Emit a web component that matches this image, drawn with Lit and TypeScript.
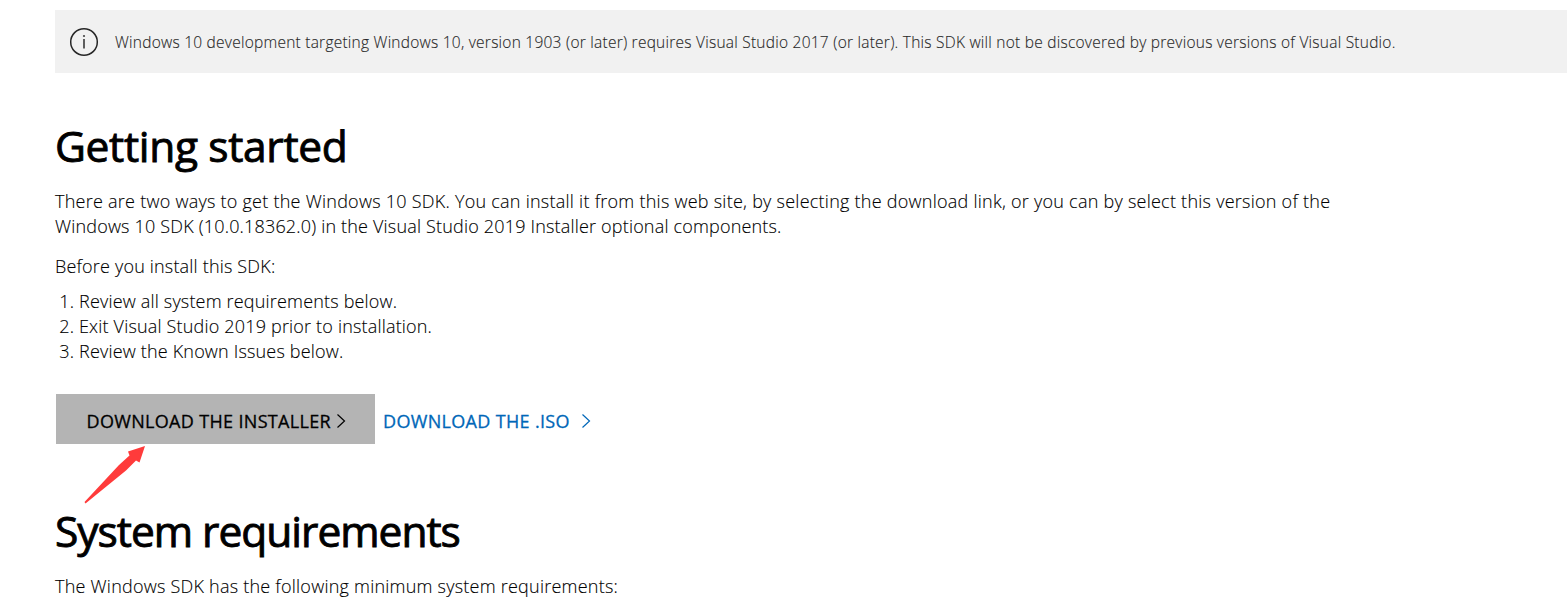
import { LitElement, html, css } from "lit";
import { customElement } from "lit/decorators.js";

const steps = [
  "Review all system requirements below.",
  "Exit Visual Studio 2019 prior to installation.",
  "Review the Known Issues below.",
];

@customElement("app-root")
export class AppRoot extends LitElement {
  static styles = css`
    :host {
      display: block;
      box-sizing: border-box;
      height: 612px;
      overflow: hidden;
      padding: 10px 0 0 55px;
      background: #fff;
      color: #000;
      font: 300 18px/25px "Open Sans", "Noto Sans", sans-serif;
      letter-spacing: 0.18px;
      white-space: nowrap;
      -webkit-text-stroke: 0.12px currentColor;
    }
    p, h2, ol { margin: 0; }
    .notice {
      display: flex;
      align-items: center;
      gap: 16px;
      height: 63px;
      box-sizing: border-box;
      padding: 0 14px 0 14px;
      background: #f1f1f1;
      color: #262626;
      font-size: 15.5px;
      letter-spacing: 0.24px;
    }
    .notice p { padding-top: 2px; }
    .info { flex: none; display: block; }
    h2 {
      font-weight: 500;
      font-size: 42.5px;
      line-height: 56px;
      -webkit-text-stroke: 0.9px currentColor;
    }
    .h-start { letter-spacing: -0.33px; }
    .h-system { letter-spacing: -1.02px; }
    .start { padding-top: 45px; }
    .lead { padding-top: 15px; }
    .t-lead1 { letter-spacing: 0.25px; }
    .t-system { letter-spacing: 0.23px; }
    .before { padding-top: 15px; }
    ol { padding: 10px 0 0 24px; }
    .actions { display: flex; align-items: center; padding: 30px 0 0 1px; }
    .button, .link {
      display: flex;
      align-items: center;
      height: 50px;
      padding-top: 4px;
      box-sizing: border-box;
      font-weight: 500;
      letter-spacing: 0.33px;
      color: inherit;
      text-decoration: none;
    }
    .button span, .link span { -webkit-text-stroke: 0.3px currentColor; }
    .button { position: relative; width: 319px; padding-left: 30.5px; gap: 4.5px; background: #b4b4b4; }
    .link { margin-left: 8px; gap: 11px; color: #0067b8; }
    .arrow { position: absolute; left: 27px; top: 51px; }
    .system { padding-top: 59px; }
  `;

  private chevron() {
    return html`<svg width="10" height="16" viewBox="0 0 10 16" fill="none" stroke="currentColor" stroke-width="1.2"><path d="M1.500 1.500 8.500 8 1.500 14.500"/></svg>`;
  }

  render() {
    return html`
      <div class="notice">
        <svg class="info" width="30" height="30" viewBox="0 0 30 30">
          <circle cx="15" cy="15" r="13.3" fill="none" stroke="#262626" stroke-width="1.5"/>
          <path d="M15 12v9.500" stroke="#444" stroke-width="1.700"/>
          <circle cx="15" cy="9" r="1.1" fill="#444"/>
        </svg>
        <p>Windows 10 development targeting Windows 10, version 1903 (or later) requires Visual Studio 2017 (or later). This SDK will not be discovered by previous versions of Visual Studio.</p>
      </div>
      <section class="start">
        <h2 class="h-start">Getting started</h2>
        <p class="lead"><span class="t-lead1">There are two ways to get the Windows 10 SDK. You can install it from this web site, by selecting the download link, or you can by select this version of the</span><br />Windows 10 SDK (10.0.18362.0) in the Visual Studio 2019 Installer optional components.</p>
        <p class="before">Before you install this SDK:</p>
        <ol>${steps.map((s) => html`<li>${s}</li>`)}</ol>
        <div class="actions">
          <a class="button"><span>DOWNLOAD THE INSTALLER</span>${this.chevron()}
            <svg class="arrow" width="64" height="60" viewBox="0 0 64 60"><path fill="#ff3b3b" d="M62 1 45 6.500 46.500 10.500 36 20 1.500 57 2.500 58.500 43 25.500 53 15.500 56.500 17.500Z"/></svg>
          </a>
          <a class="link"><span>DOWNLOAD THE .ISO</span>${this.chevron()}</a>
        </div>
      </section>
      <section class="system">
        <h2 class="h-system">System requirements</h2>
        <p class="lead t-system">The Windows SDK has the following minimum system requirements:</p>
      </section>
    `;
  }
}
